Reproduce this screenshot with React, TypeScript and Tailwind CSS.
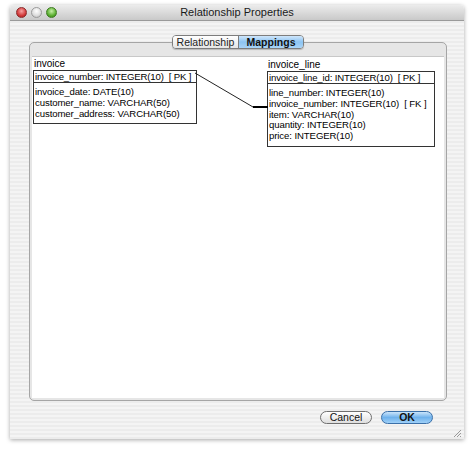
import React from 'react';

const font = { fontFamily: '"Liberation Sans", Arial, sans-serif' };

interface TableProps {
  name: string;
  pk: string;
  rows: string[];
  className: string;
}

const Table: React.FC<TableProps> = ({ name, pk, rows, className }) => (
  <div className={`absolute ${className}`}>
    <div className="text-[10px] leading-[12px] text-black pl-[1px]">{name}</div>
    <div className="border border-[#333] bg-white">
      <div className="border-b border-[#333] px-[1px] h-[12px] text-[9.6px] leading-[11px] tracking-[-0.15px] whitespace-pre">{pk}</div>
      <div className="px-[1px] pt-[4px] pb-[4px]">
        {rows.map((r) => (
          <div key={r} className="text-[9.6px] leading-[10.75px] tracking-[-0.1px] whitespace-pre">
            {r}
          </div>
        ))}
      </div>
    </div>
  </div>
);

export default function App() {
  return (
    <div className="w-[474px] h-[451px] bg-white pt-[5px] pl-[10px]" style={font}>
      <div className="w-[454px] h-[434px] flex flex-col shadow-[0_1px_4px_rgba(0,0,0,0.35)] rounded-t-[4px] overflow-hidden">
        {/* title bar */}
        <div className="h-[16px] relative flex items-center justify-center bg-gradient-to-b from-[#ececec] to-[#c9c9c9] border-b border-[#9a9a9a]">
          <div className="absolute left-[6px] top-[2px] flex gap-[4px]">
            <span className="w-[11px] h-[11px] rounded-full bg-[radial-gradient(circle_at_50%_35%,#f7a3a3,#d23a3a_60%,#9b1a1a)] border border-[#8a2a2a]" />
            <span className="w-[11px] h-[11px] rounded-full bg-[radial-gradient(circle_at_50%_35%,#ffffff,#dcdcdc_60%,#b5b5b5)] border border-[#9a9a9a]" />
            <span className="w-[11px] h-[11px] rounded-full bg-[radial-gradient(circle_at_50%_35%,#c8f0a8,#5cb032_60%,#2f7a14)] border border-[#3e7a22]" />
          </div>
          <span className="text-[11px] text-[#1a1a1a] leading-none font-medium">Relationship Properties</span>
        </div>

        {/* body */}
        <div className="flex-1 flex flex-col bg-[repeating-linear-gradient(0deg,#ececec_0px,#ececec_2px,#f4f4f4_2px,#f4f4f4_4px)] pl-[19px] pr-[17px] pt-[14px]">
          <div className="relative flex justify-center h-[14px] z-10 -mb-[7px]">
            <div className="flex h-[14px] rounded-[4px] border border-[#7d7d7d] overflow-hidden text-[10.5px] leading-[12px] shadow-[0_1px_1px_rgba(0,0,0,0.2)]">
              <div className="w-[66px] flex items-center justify-center bg-gradient-to-b from-white to-[#e6e6e6] border-r border-[#7d7d7d] text-[#222]">
                Relationship
              </div>
              <div className="w-[64px] flex items-center justify-center bg-gradient-to-b from-[#cfe6fb] via-[#8cc4f2] to-[#a9d4f7] text-[#111] font-bold">
                Mappings
              </div>
            </div>
          </div>

          <div className="h-[359px] rounded-[5px] border border-[#a5a5a5] bg-[#e6e6e6] px-[2px] pt-[13px] pb-[2px] flex">
            <div className="flex-1 relative bg-white border-t border-[#c8c8c8]">
              <Table
                name="invoice"
                pk="invoice_number: INTEGER(10)  [ PK ]"
                rows={[
                  'invoice_date: DATE(10)',
                  'customer_name: VARCHAR(50)',
                  'customer_address: VARCHAR(50)',
                ]}
                className="left-[1px] top-[1px] w-[164px]"
              />
              <Table
                name="invoice_line"
                pk="invoice_line_id: INTEGER(10)  [ PK ]"
                rows={[
                  'line_number: INTEGER(10)',
                  'invoice_number: INTEGER(10)  [ FK ]',
                  'item: VARCHAR(10)',
                  'quantity: INTEGER(10)',
                  'price: INTEGER(10)',
                ]}
                className="left-[235px] top-[2px] w-[168px]"
              />
              <svg className="absolute left-0 top-0" width="240" height="60">
                <line x1="163" y1="16" x2="221" y2="50" stroke="#222" strokeWidth="1" />
                <line x1="221" y1="50" x2="236" y2="50" stroke="#000" strokeWidth="2" />
              </svg>
            </div>
          </div>

          <div className="flex justify-end gap-[9px] mt-[10px] pr-[14px]">
            <div className="w-[52px] h-[13px] rounded-full border border-[#6f6f6f] bg-gradient-to-b from-white to-[#dedede] flex items-center justify-center text-[10.5px] text-[#111]">
              Cancel
            </div>
            <div className="w-[52px] h-[13px] rounded-full border border-[#3a6fa8] bg-gradient-to-b from-[#cbe5fb] via-[#6fb2ec] to-[#9fd0f8] flex items-center justify-center text-[10.5px] text-[#111] font-bold">
              OK
            </div>
          </div>
          <div className="flex justify-end mt-auto pb-[1px] -mr-[15px]">
            <svg width="10" height="10">
              <line x1="9" y1="2" x2="2" y2="9" stroke="#999" />
              <line x1="9" y1="5" x2="5" y2="9" stroke="#999" />
              <line x1="9" y1="8" x2="8" y2="9" stroke="#999" />
            </svg>
          </div>
        </div>
      </div>
    </div>
  );
}
